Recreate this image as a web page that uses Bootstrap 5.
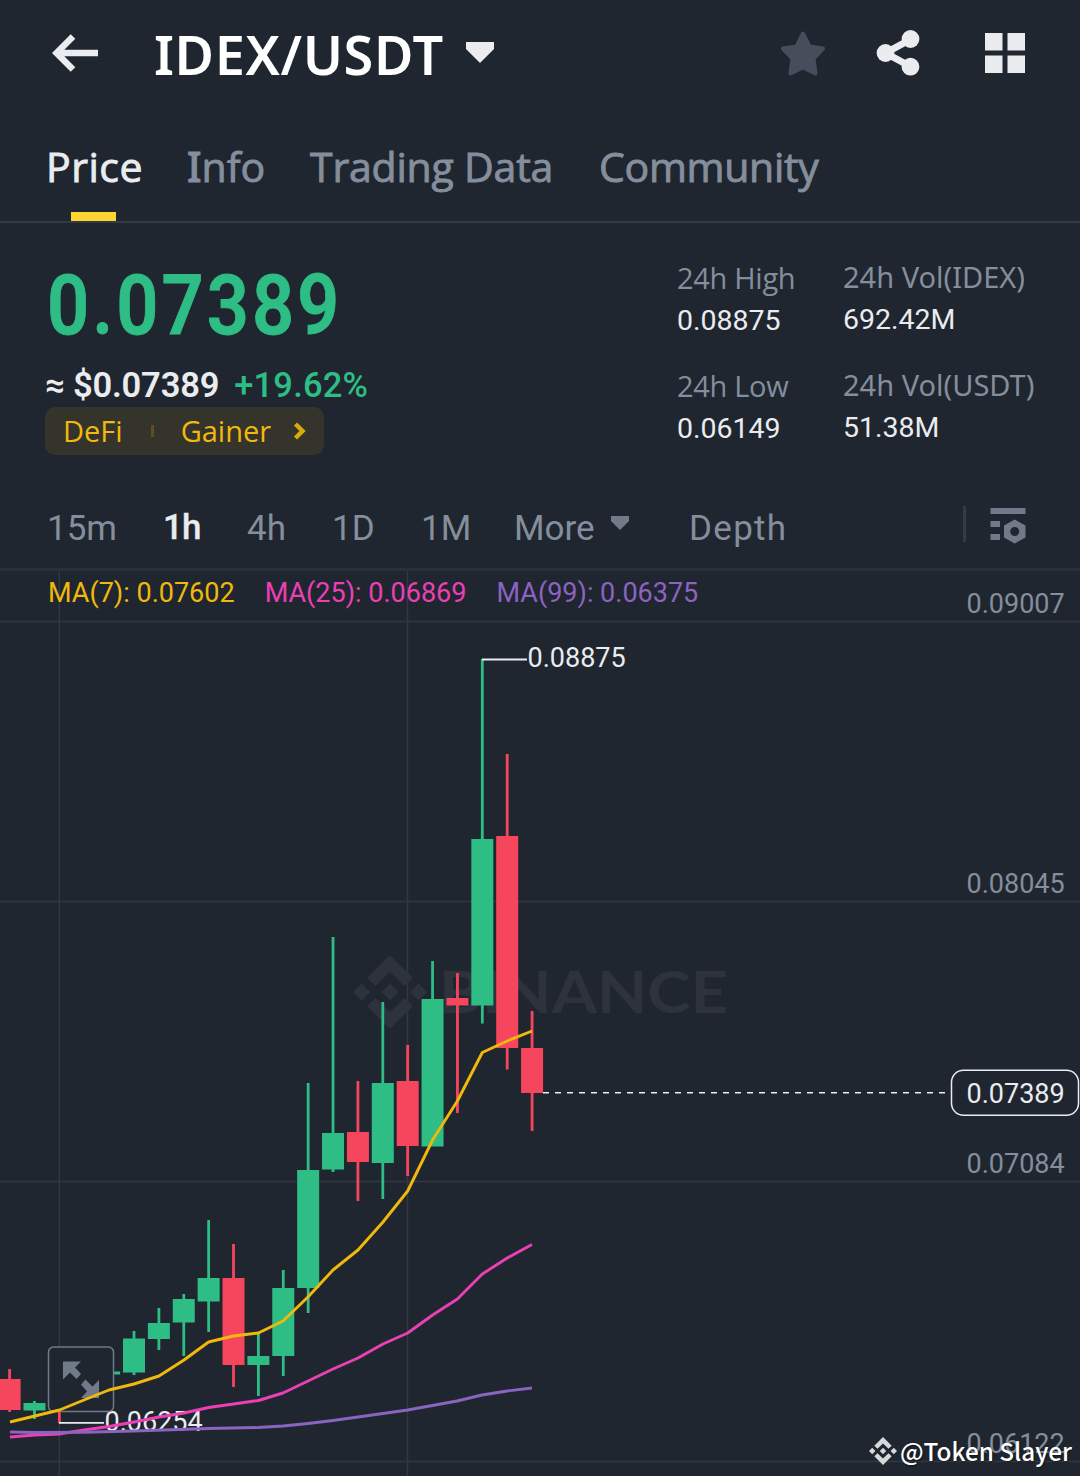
<!DOCTYPE html>
<html lang="en">
<head>
<meta charset="utf-8">
<meta name="viewport" content="width=device-width, initial-scale=1">
<title>IDEX/USDT</title>
<link href="https://cdn.jsdelivr.net/npm/bootstrap@5.3.0/dist/css/bootstrap.min.css" rel="stylesheet">
<style>
  body { background: #1f262f; color: #eaecef; font-family: Roboto, sans-serif; width: 1080px; height: 1476px; overflow: hidden; }
  svg { display: block; flex: none; }
  .plex { font-family: "Open Sans", "Noto Sans", sans-serif; }
  .serif-i { font-family: "Noto Sans", sans-serif; }
  .dim { color: #848e9c; }
  .up { color: #2ebd85; }
  .topbar { height: 106px; padding: 0 54px 0 52px; }
  .pair { font-size: 54px; font-weight: 600; line-height: 74px; color: #fff; margin-left: 56px; width: 312px; letter-spacing: .6px; padding-top: 1px; }
  .tabbar { height: 117px; padding-left: 46px; border-bottom: 2px solid #333b47; }
  .tabbar .tab-item { font-size: 41px; font-weight: 500; line-height: 56px; padding: 4px 0 0; border: 0; background: none; border-radius: 0; color: #848e9c; text-align: left; position: relative; -webkit-text-stroke: .9px currentColor; }
  .tabbar .tab-item.active { color: #eaecef; }
  .tabbar .tab-item.active::after { content: ""; position: absolute; left: 25px; bottom: 0; width: 45px; height: 9px; background: #fcd535; }
  .w-price { width: 141px; letter-spacing: .5px; } .w-info { width: 123px; } .w-data { width: 289px; letter-spacing: -.2px; } .w-comm { letter-spacing: -.3px; }
  .summary { height: 255px; padding: 39px 0 0 45px; }
  .quote { width: 632px; }
  .last { font-size: 84px; font-weight: 600; line-height: 88px; letter-spacing: 3.4px; margin-left: 1.5px; transform: scaleX(.88); transform-origin: 0 0; -webkit-text-stroke: .8px currentColor; }
  .approx { font-size: 34.5px; font-weight: 600; line-height: 40px; margin-top: 15px; letter-spacing: -.2px; }
  .change { font-weight: 500; margin-left: 15px; letter-spacing: .2px; }
  .tagpill { width: 279px; height: 48px; margin-top: 2px; border-radius: 10px; background: #35342c; color: #f0b90b; font-size: 29px; padding: 0 18px; }
  .tagsep { width: 3px; height: 12px; background: #5d4f20; margin: 0 27px 0 28px; }
  .statcol { width: 166px; margin-top: -5px; }
  .statcol + .statcol { margin-top: -6px; }
  .statcol .k { font-size: 29px; line-height: 42px; white-space: nowrap; letter-spacing: -.3px; }
  .statcol .k.serif-i { letter-spacing: 0; }
  .statcol .v { font-size: 28.5px; line-height: 44.500px; }
  .statcol .grp { height: 108px; }
  .frames { height: 93px; padding: 0 54px 0 47px; font-size: 35px; line-height: 50px; border-bottom: 3px solid #29303a; }
  .frames > span:not(.vr-line) { padding-top: 11px; }
  .frames .vr-line { width: 3px; height: 36px; background: #333b47; margin-top: 2px; }
  .frames .now { color: #eaecef; font-weight: 500; -webkit-text-stroke: .3px currentColor; padding-top: 9px !important; letter-spacing: -.8px; }
  .chartbox { height: 905px; }
  .legend { left: 48px; top: 4px; gap: 30px; font-size: 27px; line-height: 36px; }
  .c7 { color: #f0b90b; } .c25 { color: #eb40b5; } .c99 { color: #8b63c0; }
  .axis { font-size: 27px; fill: #848e9c; }
  .lite { font-size: 27px; fill: #eaecef; }
  .credit { left: 869px; bottom: 5px; gap: 3px; font: 500 24.3px/40px "Noto Sans CJK SC", sans-serif; color: #fff; text-shadow: 1px 1px 2px #0008; white-space: nowrap; }
</style>
</head>
<body>
<svg width="0" height="0" class="position-absolute">
  <defs>
    <symbol id="bnb" viewBox="0 0 74 74">
      <path d="M37 0 60 23 51.500 31 37 17 22.500 31 14 23ZM37 74 14 51 22.500 43 37 57 51.500 43 60 51ZM0 37l8.500-8.500 8.500 8.500-8.500 8.500ZM57 37l8.500-8.500 8.500 8.500-8.500 8.500ZM28.500 37l8.500-8.500 8.500 8.500-8.500 8.500Z"/>
    </symbol>
  </defs>
</svg>

<header class="topbar d-flex align-items-center">
  <svg width="46" height="38" viewBox="0 0 46 38"><path d="M46 19H5M21 2.500 4.500 19 21 35.500" fill="none" stroke="#eaecef" stroke-width="6.500"/></svg>
  <div class="pair serif-i">IDEX/USDT</div>
  <svg width="30" height="22" viewBox="0 0 30 22"><path d="M0 0h28v7L14 21 0 7Z" fill="#eaecef"/></svg>
  <div class="d-flex align-items-center ms-auto">
    <svg width="46" height="48" viewBox="0 0 46 48"><path d="M23 4.500 29.500 17.500 43 19.500 33.500 29.500 35.500 44.500 23 38.500 10.500 44.500 12.500 29.500 3 19.500 16.500 17.500Z" fill="#474d5b" stroke="#474d5b" stroke-width="4" stroke-linejoin="round"/></svg>
    <svg class="mx-5" width="46" height="48" viewBox="-1.500 0 46 48"><path d="M35 10.500 10 24 35 37.500" fill="none" stroke="#eaecef" stroke-width="7"/><g fill="#eaecef"><circle cx="35" cy="10" r="8.900"/><circle cx="10" cy="24" r="8.900"/><circle cx="35" cy="37.700" r="8.900"/></g></svg>
    <svg class="ms-3" width="42" height="41" viewBox="0 0 42 41"><path d="M1 0h17.500v17.500H1zM23.500 0H41v17.500H23.500zM1 22.500h17.500V40H1zM23.500 22.500H41V40H23.500z" fill="#eaecef"/></svg>
  </div>
</header>

<nav class="tabbar d-flex plex">
  <button class="tab-item active w-price">Price</button>
  <button class="tab-item w-info"><span class="serif-i">I</span>nfo</button>
  <button class="tab-item w-data">Trading Data</button>
  <button class="tab-item w-comm">Community</button>
</nav>

<section class="summary d-flex">
  <div class="quote">
    <div class="last up">0.07389</div>
    <div class="approx d-flex"><span>≈ $0.07389</span><span class="change up">+19.62%</span></div>
    <div class="tagpill plex d-flex align-items-center">
      <span>DeFi</span><span class="tagsep"></span><span>Gainer</span>
      <svg class="ms-auto" width="13" height="18" viewBox="0 0 13 18"><path d="M2.500 2 9.500 9 2.500 16" fill="none" stroke="#d9a90f" stroke-width="4.500"/></svg>
    </div>
  </div>
  <div class="statcol">
    <div class="grp"><div class="k dim plex">24h High</div><div class="v">0.08875</div></div>
    <div class="grp"><div class="k dim plex">24h Low</div><div class="v">0.06149</div></div>
  </div>
  <div class="statcol">
    <div class="grp"><div class="k dim serif-i">24h Vol(IDEX)</div><div class="v">692.42M</div></div>
    <div class="grp"><div class="k dim serif-i">24h Vol(USDT)</div><div class="v">51.38M</div></div>
  </div>
</section>

<section class="frames d-flex align-items-center dim">
  <span style="width:116px">15m</span>
  <span class="now" style="width:84px">1h</span>
  <span style="width:85px">4h</span>
  <span style="width:89px">1D</span>
  <span style="width:93px">1M</span>
  <span style="width:97px">More</span>
  <svg width="18" height="14" viewBox="0 0 18 14"><path d="M0 0h18v5L9 14 0 5Z" fill="#717a88"/></svg>
  <span style="margin-left:60px;letter-spacing:1.300px">Depth</span>
  <span class="vr-line ms-auto"></span>
  <svg class="ms-4 mt-1" width="36" height="37" viewBox="0 0 36 37"><path fill-rule="evenodd" fill="#717a88" d="M.5 1h35v6H.5zM.5 14H10v6H.5zM.5 27H10v6H.5zM24.700 12.500 35.500 18.500V30.500L24.700 36.500 14 30.500V18.500ZM24.700 20a4.500 4.500 0 1 0 0 9 4.500 4.500 0 1 0 0-9Z"/></svg>
</section>

<main class="chartbox position-relative">
  <svg width="1080" height="905" viewBox="0 571 1080 905">
    <path d="M0 621.500H1080M0 901.500H1080M0 1181.500H1080M0 1461.500H1080M59.300 571V1476M407.500 571V1476" stroke="#313844" stroke-width="1.500"/>
    <g fill="#2d323d">
      <use href="#bnb" x="353" y="955" width="74" height="74"/>
      <text x="439" y="1012.500" font-family="Lato, sans-serif" font-weight="700" font-size="57" textLength="289" lengthAdjust="spacingAndGlyphs">BINANCE</text>
    </g>
    <g id="candles"></g>
    <path d="M482 659.500H527M59 1422.800H104" stroke="#eaecef" stroke-width="1.800"/>
    <text class="lite" x="527.500" y="667">0.08875</text>
    <text class="lite" x="104.500" y="1430.500">0.06254</text>
    <rect x="48.500" y="1347" width="65" height="64.500" rx="5" fill="#1f262f" stroke="#717a88" stroke-width="1.500"/>
    <path fill="#717a88" d="M63 1361.500H81L75 1367.500 81 1374 76.500 1379 70 1372.500 63 1379.500ZM99 1398H81L87 1391.500 81 1384.500 85.500 1379.500 92.500 1386.500 99 1380Z"/>
    <g fill="none" stroke-width="2.900" stroke-linejoin="round">
      <polyline stroke="#f0b90b" points="10,1422 59.500,1410 84,1400 109,1390 134,1384 159,1376 184,1360 208.600,1342 233.500,1336 258.400,1333 283,1321 308,1297 333,1270 358,1250 383,1222 407.700,1191 432.600,1140 457.400,1101 482.300,1052.500 507.200,1041 532,1031"/>
      <polyline stroke="#eb40b5" points="10,1437 35,1435 59,1434 84,1430 109,1426.500 134,1422 159,1417 184,1413 208.600,1407.500 233.500,1404 258.400,1400.500 283,1393 308,1381 333,1369 358,1358 383,1344 407.700,1333 432.600,1315 457.400,1299 482.300,1274 507.200,1258 532,1244.500"/>
      <polyline stroke="#8b63c0" points="10,1432 35,1432.500 84,1432.300 134,1431 208.600,1428.500 258,1427.500 283,1426 308,1423.500 333,1420.500 358,1417 407.700,1410 457,1401 482,1395 507,1391 532,1388"/>
    </g>
    <path d="M543 1092.700H946" stroke="#eaecef" stroke-width="1.500" stroke-dasharray="6 6"/>
    <rect x="951.500" y="1070.300" width="127" height="45" rx="12" fill="#1f262f" stroke="#eaecef" stroke-width="1.500"/>
    <text class="lite" x="966.500" y="1102.500">0.07389</text>
    <g class="axis">
      <text x="966.500" y="612.500">0.09007</text><text x="966.500" y="892.500">0.08045</text>
      <text x="966.500" y="1172.500">0.07084</text><text x="966.500" y="1452.500">0.06122</text>
    </g>
  </svg>
  <div class="legend position-absolute d-flex">
    <span class="c7">MA(7): 0.07602</span><span class="c25">MA(25): 0.06869</span><span class="c99">MA(99): 0.06375</span>
  </div>
  <div class="credit position-absolute d-flex align-items-center">
    <svg width="28" height="28" fill="#d6d8da"><use href="#bnb" width="28" height="28"/></svg><span>@Token Slayer</span>
  </div>
</main>

<script>
  // One candle per hour: [rising, body top, body bottom, wick top, wick bottom]
  const candles = [
    [0,1379,1410,1369,1412],[1,1403,1410.5,1401,1419],[0,1395,1405,1390,1423],[1,1384,1390,1380,1394],
    [1,1371.5,1374.5,1371,1375],[1,1338.5,1372.5,1331,1375],[1,1323,1339,1308,1350],[1,1299,1322.5,1294,1356],
    [1,1278,1301.5,1220,1332],[0,1278,1365,1244,1387],[1,1356,1365,1333,1396],[1,1288,1356,1270,1376],
    [1,1170,1288,1083,1313],[1,1133,1169.5,937,1172],[0,1132,1162,1081,1201],[1,1083,1163,1002,1199],
    [0,1081,1146,1045,1176],[1,999,1146.5,961,1146],[0,998,1005.5,973,1113],[1,839,1005.5,659,1023.5],
    [0,836,1048,754,1069.5],[0,1048,1093,1011,1131]
  ];
  document.getElementById('candles').innerHTML = candles.map(([up, t, b, hi, lo], i) => {
    const x = 9.6 + 24.88 * i, c = up ? '#2ebd85' : '#f6465d';
    return `<path fill="${c}" d="M${x - 11} ${t}h22V${b}h-22zM${x - 1.4} ${hi}h2.800V${lo}h-2.800z"/>`;
  }).join('');
</script>
<script src="https://cdn.jsdelivr.net/npm/bootstrap@5.3.0/dist/js/bootstrap.bundle.min.js"></script>
</body>
</html>
